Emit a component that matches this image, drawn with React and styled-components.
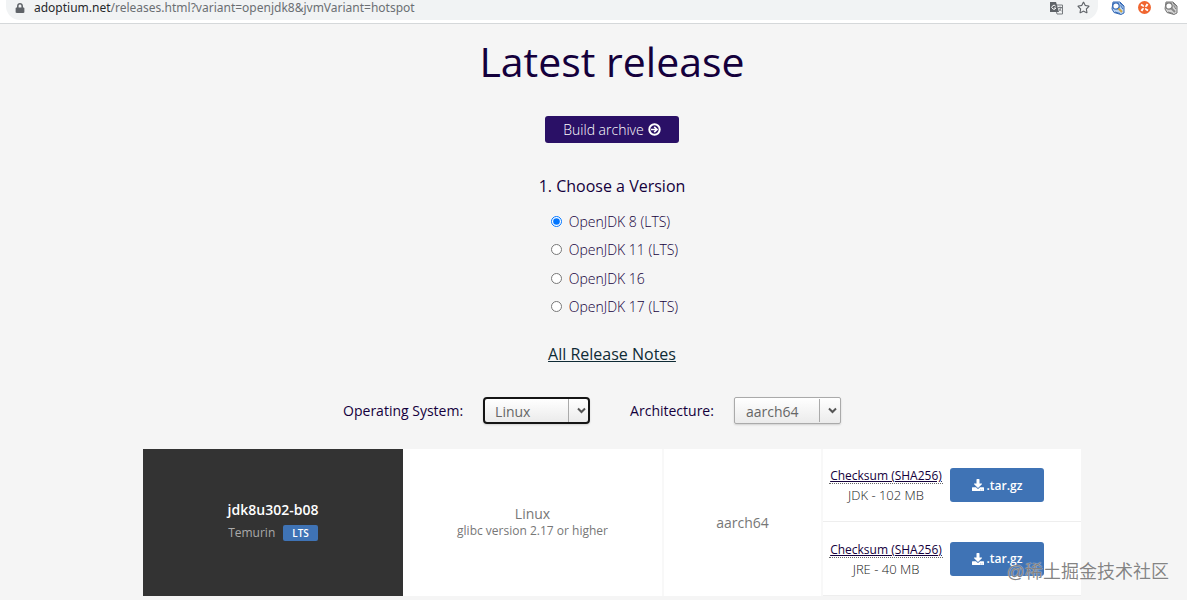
import React, { useState } from "react";
import styled, { createGlobalStyle } from "styled-components";
import { FaDownload, FaLock, FaRegStar } from "react-icons/fa";

const GlobalStyle = createGlobalStyle`
  * {
    box-sizing: border-box;
  }
  body {
    margin: 0;
    background: #f5f5f5;
    color: #14003c;
    font-family: "Open Sans", "Noto Sans", sans-serif;
  }
`;

const Page = styled.div`
  position: relative;
  min-height: 600px;
  overflow: hidden;
`;

const BrowserBar = styled.header`
  display: flex;
  align-items: flex-start;
  height: 24px;
  padding-left: 6px;
  background: #fff;
  border-bottom: 1px solid #d5d8da;
`;

const AddressBar = styled.div`
  display: flex;
  flex: 1;
  align-items: center;
  height: 20px;
  padding: 0 8px 4px 9px;
  background: #f1f3f4;
  border-radius: 0 0 14px 14px;
  color: #5f6368;
`;

const Url = styled.div`
  flex: 1;
  margin-left: 9px;
  font-family: "Noto Sans", sans-serif;
  font-size: 12px;
  line-height: 16px;
  color: #6b6f73;
`;

const Host = styled.span`
  color: #26282b;
`;

const BarIcons = styled.div`
  display: flex;
  gap: 14px;
`;

const Extensions = styled.div`
  display: flex;
  gap: 13px;
  padding: 1px 9px 0 13px;
`;

const Main = styled.main`
  display: flex;
  flex-direction: column;
  align-items: center;
  padding: 8px 0 0 37px;
`;

const Title = styled.h1`
  margin: 0;
  font-size: 41px;
  font-weight: 400;
  line-height: 58px;
`;

const ArchiveButton = styled.button`
  display: flex;
  align-items: center;
  gap: 4px;
  height: 27px;
  margin-top: 26px;
  padding: 0 18px;
  border: 0;
  border-radius: 3px;
  background: #2a1066;
  color: #fff;
  font-family: inherit;
  font-size: 14px;
  font-weight: 300;
`;

const Versions = styled.fieldset`
  display: grid;
  justify-items: center;
  margin: 32px 0 0;
  padding: 0;
  border: 0;
`;

const Legend = styled.legend`
  padding: 0;
  font-size: 16px;
  line-height: 22px;
`;

const VersionList = styled.div`
  display: grid;
  grid-template-rows: repeat(4, 1fr);
  justify-self: start;
  height: 114px;
  margin: 10px 0 0 12px;
`;

const Version = styled.label`
  display: flex;
  align-items: center;
  gap: 7px;
  font-size: 14px;
  font-weight: 300;
`;

const Radio = styled.input`
  width: 11px;
  height: 11px;
  margin: 0;
  accent-color: #0075ff;
`;

const NotesLink = styled.a`
  margin-top: 21px;
  color: #0f2b35;
  font-size: 16px;
  line-height: 24px;
`;

const Filters = styled.div`
  display: flex;
  margin-top: 31px;
`;

const Filter = styled.div`
  display: flex;
  align-items: center;
  gap: 20px;
  margin-right: 40px;
  font-size: 14px;
`;

const SelectBox = styled.div`
  position: relative;
  width: 107px;
  height: 27px;
`;

const Select = styled.select`
  appearance: none;
  width: 100%;
  height: 100%;
  padding: 2px 24px 0 ${(p) => (p.$active ? "10px" : "11px")};
  border: ${(p) => (p.$active ? "2px solid #151515" : "1px solid #aaa")};
  border-radius: ${(p) => (p.$active ? "4px" : "2px")};
  background: linear-gradient(#fff, #ebebeb);
  box-shadow: 0 1px 2px rgba(0, 0, 0, 0.15);
  color: #666;
  font-family: inherit;
  font-size: 14px;
  outline: none;
`;

const Arrow = styled.span`
  position: absolute;
  top: 2px;
  right: 2px;
  bottom: 2px;
  display: flex;
  align-items: center;
  justify-content: flex-end;
  width: 20px;
  padding-right: 2px;
  border-left: 1px solid #aaa;
  pointer-events: none;
`;

const Releases = styled.table`
  width: 82%;
  max-width: 938px;
  height: 147px;
  margin-top: 25px;
  table-layout: fixed;
  border-collapse: collapse;
  background: #fff;
  color: #777;
  font-size: 14px;
  text-align: center;
`;

const Cell = styled.td`
  padding: 0;
  border-right: 2px solid #f8f8f8;
`;

const ReleaseCell = styled(Cell)`
  border-right: 0;
  background: #333;
  color: #aaa;
  font-size: 12px;
`;

const ReleaseName = styled.div`
  color: #fff;
  font-size: 14px;
  font-weight: 600;
  line-height: 22px;
`;

const Distribution = styled.div`
  display: flex;
  align-items: center;
  justify-content: center;
  gap: 8px;
  line-height: 24px;
`;

const Badge = styled.span`
  padding: 0 9px;
  border-radius: 2px;
  background: #3f73b5;
  color: #fff;
  font-size: 10px;
  font-weight: 600;
  line-height: 16px;
`;

const Platform = styled.div`
  line-height: 18px;
`;

const Requirement = styled.div`
  font-size: 12px;
  line-height: 16px;
`;

const DownloadCell = styled.td`
  padding: 0 0 0 6px;
  border-bottom: 1px solid #eee;
`;

const Download = styled.div`
  display: flex;
  align-items: center;
  gap: 7px;
`;

const FileInfo = styled.div`
  width: 114px;
  padding-top: 4px;
  color: #222;
  font-size: 13px;
  font-weight: 300;
  line-height: 22px;
  white-space: nowrap;
`;

const Checksum = styled.a`
  display: block;
  border-bottom: 1px dotted #666;
  color: #14003c;
  font-size: 12px;
  font-weight: 400;
  line-height: 15px;
`;

const DownloadButton = styled.button`
  display: flex;
  align-items: center;
  justify-content: center;
  gap: 3px;
  width: 94px;
  height: 34px;
  padding: 0;
  border: 0;
  border-radius: 3px;
  background: #3f73b5;
  color: #fff;
  font-family: inherit;
  font-size: 12px;
  font-weight: 600;
`;

const Watermark = styled.div`
  position: absolute;
  right: 18px;
  bottom: 15px;
  color: rgba(110, 110, 110, 0.85);
  font-family: "Liberation Sans", "Noto Sans CJK SC", sans-serif;
  font-size: 18px;
  line-height: 26px;
  text-shadow: 0 0 1px #fff;
`;

const versions = ["OpenJDK 8 (LTS)", "OpenJDK 11 (LTS)", "OpenJDK 16", "OpenJDK 17 (LTS)"];

const files = [
  { type: "JDK", size: "102 MB" },
  { type: "JRE", size: "40 MB" },
];

const TranslateIcon = () => (
  <svg width="13" height="14" viewBox="0 0 13 14">
    <path d="M5 4h7.5v9H7z" fill="#f1f3f4" stroke="#777b7f" />
    <path d="M0 1h6l3 10H0z" fill="#5f6368" />
    <path d="M5.6 5.2A2 2 0 1 0 5.8 7H4" fill="none" stroke="#fff" />
    <path d="M8 6.5h4M10 5.500v1M11.300 6.500c-.3 1.500-1.300 2.500-2.300 3.200M9 7.500l2.500 2.800" fill="none" stroke="#5f6368" strokeWidth=".8" />
  </svg>
);

const SearchExtension = ({ color, fill, accent }) => (
  <svg width="14" height="14" viewBox="0 0 14 14">
    <path d="M2 1h7l4 4v7l-3 1.500-7-2L1 8z" fill={fill} stroke={color} />
    <path d="M9 2l3 3.500M9.500 4.500L12 8M4 11l5 1.500" stroke={color} />
    <circle cx="5" cy="5" r="3.200" fill="#fff" stroke={color} strokeWidth="1.200" />
    <path d="M7.500 7.500l3.500 3.500" stroke={accent} strokeWidth="2" />
  </svg>
);

const OrangeExtension = () => (
  <svg width="13" height="13" viewBox="0 0 13 13">
    <circle cx="6.500" cy="6.500" r="6.500" fill="#f0652f" />
    <path d="M3 3.500l2.500 1.500M7.500 8l2.500 1.500M9.500 3l-1.500 2.500M5 7.500L3.500 10" stroke="#fff" strokeWidth="2" />
    <path d="M4.500 4.500l4 4M8.500 4.500l-4 4" stroke="#fff" strokeWidth="1" />
    <circle cx="6.500" cy="6.500" r="1.200" fill="#f0652f" />
  </svg>
);

const ArrowCircle = () => (
  <svg width="13" height="13" viewBox="0 0 13 13" fill="none" stroke="#fff" strokeWidth="2">
    <circle cx="6.500" cy="6.500" r="5.200" />
    <path d="M3 6.500h5M6.200 3.800l2.800 2.700-2.800 2.700" strokeWidth="1.600" />
  </svg>
);

const Chevron = () => (
  <svg width="9" height="7" viewBox="0 0 9 7">
    <path d="M1 1.500l3.500 3.500L8 1.500" fill="none" stroke="#555" strokeWidth="2" />
  </svg>
);

const Dropdown = ({ id, label, value, active }) => (
  <Filter>
    <label htmlFor={id}>{label}</label>
    <SelectBox>
      <Select id={id} $active={active} defaultValue={value}>
        <option>{value}</option>
      </Select>
      <Arrow>
        <Chevron />
      </Arrow>
    </SelectBox>
  </Filter>
);

const App = () => {
  const [version, setVersion] = useState(versions[0]);

  return (
    <Page>
      <GlobalStyle />
      <BrowserBar>
        <AddressBar>
          <FaLock size={10} />
          <Url>
            <Host>adoptium.net</Host>/releases.html?variant=openjdk8&amp;jvmVariant=hotspot
          </Url>
          <BarIcons>
            <TranslateIcon />
            <FaRegStar size={13} />
          </BarIcons>
        </AddressBar>
        <Extensions>
          <SearchExtension color="#3569b5" fill="#b9d3f2" accent="#d5a83c" />
          <OrangeExtension />
          <SearchExtension color="#777" fill="#d5d5d5" accent="#888" />
        </Extensions>
      </BrowserBar>

      <Main>
        <Title>Latest release</Title>
        <ArchiveButton type="button">
          Build archive <ArrowCircle />
        </ArchiveButton>

        <Versions>
          <Legend>1. Choose a Version</Legend>
          <VersionList>
            {versions.map((name) => (
              <Version key={name}>
                <Radio
                  type="radio"
                  name="version"
                  checked={version === name}
                  onChange={() => setVersion(name)}
                />
                {name}
              </Version>
            ))}
          </VersionList>
        </Versions>

        <NotesLink href="#notes">All Release Notes</NotesLink>

        <Filters>
          <Dropdown id="os" label="Operating System:" value="Linux" active />
          <Dropdown id="arch" label="Architecture:" value="aarch64" />
        </Filters>

        <Releases>
          <colgroup>
            <col width="260" />
            <col width="260" />
            <col width="159" />
            <col width="259" />
          </colgroup>
          <tbody>
            {files.map((file, i) => (
              <tr key={file.type}>
                {i === 0 && (
                  <>
                    <ReleaseCell rowSpan={2}>
                      <ReleaseName>jdk8u302-b08</ReleaseName>
                      <Distribution>
                        Temurin <Badge>LTS</Badge>
                      </Distribution>
                    </ReleaseCell>
                    <Cell rowSpan={2}>
                      <Platform>Linux</Platform>
                      <Requirement>glibc version 2.17 or higher</Requirement>
                    </Cell>
                    <Cell rowSpan={2}>aarch64</Cell>
                  </>
                )}
                <DownloadCell>
                  <Download>
                    <FileInfo>
                      <Checksum href="#checksum">Checksum (SHA256)</Checksum>
                      {file.type} - {file.size}
                    </FileInfo>
                    <DownloadButton type="button">
                      <FaDownload size={12} /> .tar.gz
                    </DownloadButton>
                  </Download>
                </DownloadCell>
              </tr>
            ))}
          </tbody>
        </Releases>
      </Main>
      <Watermark>@稀土掘金技术社区</Watermark>
    </Page>
  );
};

export default App;
